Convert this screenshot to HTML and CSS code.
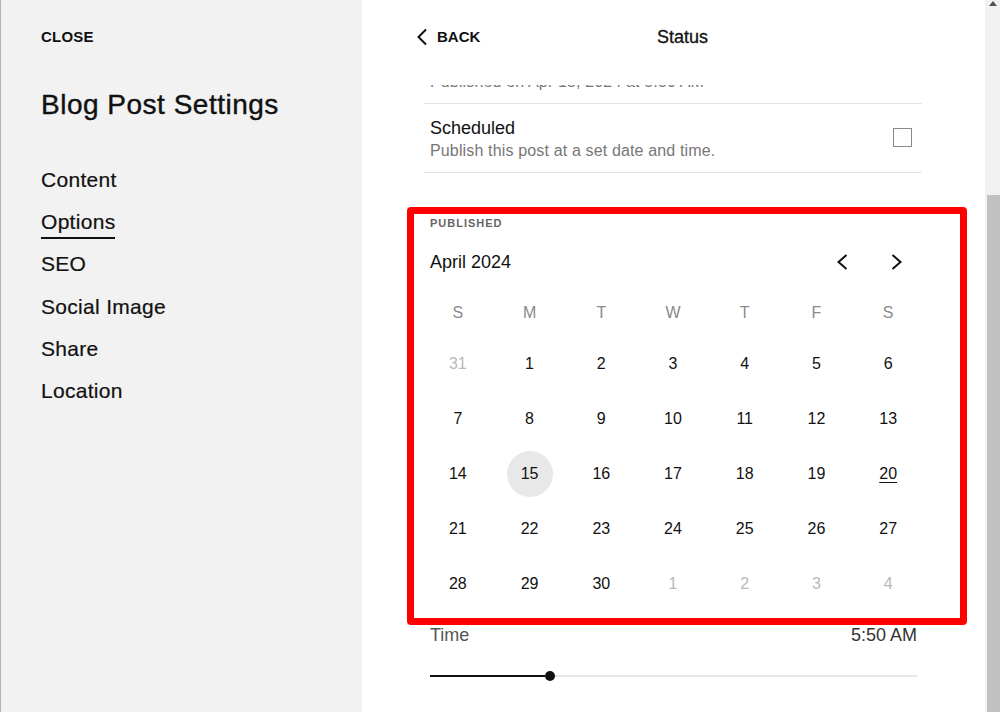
FILE: index.html
```html
<!DOCTYPE html>
<html lang="en">
<head>
<meta charset="utf-8">
<title>Blog Post Settings</title>
<link rel="stylesheet" href="styles.css">
</head>
<body>
<div class="app">
  <aside class="side">
    <div class="close">CLOSE</div>
    <h1 class="title">Blog Post Settings</h1>
    <nav class="nav">
      <a class="nav-item">Content</a>
      <a class="nav-item active"><span>Options</span></a>
      <a class="nav-item">SEO</a>
      <a class="nav-item">Social Image</a>
      <a class="nav-item">Share</a>
      <a class="nav-item">Location</a>
    </nav>
  </aside>

  <main class="panel">
    <header class="panel-head">
      <a class="back">
        <svg class="back-icon" viewBox="0 0 12 18" width="12" height="18"><path d="M10 1.5 L2.5 9 L10 16.5" fill="none" stroke="#111" stroke-width="2"/></svg>
        <span>BACK</span>
      </a>
      <div class="head-title">Status</div>
      <div></div>
    </header>

    <div class="viewport">
      <div class="scroll">
        <div class="row">
          <div class="row-text">
            <div class="row-title">Published</div>
            <div class="row-sub">Published on Apr 15, 2024 at 5:50 AM</div>
          </div>
          <span class="checkbox"></span>
        </div>
        <div class="row">
          <div class="row-text">
            <div class="row-title">Scheduled</div>
            <div class="row-sub">Publish this post at a set date and time.</div>
          </div>
          <span class="checkbox"></span>
        </div>

        <section class="cal">
          <div class="cal-label">PUBLISHED</div>
          <div class="cal-head">
            <div class="month">April 2024</div>
            <div class="cal-nav">
              <button class="nav-btn"><svg viewBox="0 0 12 16" width="12" height="16"><path d="M10.5 1 L2.5 8 L10.5 15" fill="none" stroke="#111" stroke-width="2"/></svg></button>
              <button class="nav-btn"><svg viewBox="0 0 12 16" width="12" height="16"><path d="M1.5 1 L9.5 8 L1.5 15" fill="none" stroke="#111" stroke-width="2"/></svg></button>
            </div>
          </div>
          <div class="grid">
            <div class="dow">S</div><div class="dow">M</div><div class="dow">T</div><div class="dow">W</div><div class="dow">T</div><div class="dow">F</div><div class="dow">S</div>

            <div class="day muted"><span>31</span></div><div class="day"><span>1</span></div><div class="day"><span>2</span></div><div class="day"><span>3</span></div><div class="day"><span>4</span></div><div class="day"><span>5</span></div><div class="day"><span>6</span></div>

            <div class="day"><span>7</span></div><div class="day"><span>8</span></div><div class="day"><span>9</span></div><div class="day"><span>10</span></div><div class="day"><span>11</span></div><div class="day"><span>12</span></div><div class="day"><span>13</span></div>

            <div class="day"><span>14</span></div><div class="day sel"><span>15</span></div><div class="day"><span>16</span></div><div class="day"><span>17</span></div><div class="day"><span>18</span></div><div class="day"><span>19</span></div><div class="day today"><span>20</span></div>

            <div class="day"><span>21</span></div><div class="day"><span>22</span></div><div class="day"><span>23</span></div><div class="day"><span>24</span></div><div class="day"><span>25</span></div><div class="day"><span>26</span></div><div class="day"><span>27</span></div>

            <div class="day"><span>28</span></div><div class="day"><span>29</span></div><div class="day"><span>30</span></div><div class="day muted"><span>1</span></div><div class="day muted"><span>2</span></div><div class="day muted"><span>3</span></div><div class="day muted"><span>4</span></div>
          </div>
          <div class="highlight"></div>
        </section>

        <div class="time-row">
          <span class="time-label">Time</span>
          <span class="time-value">5:50 AM</span>
        </div>
        <div class="slider">
          <span class="fill"></span>
          <span class="thumb"></span>
          <span class="rest"></span>
        </div>
      </div>
    </div>
  </main>

  <div class="scrollbar">
    <div class="sb-track"><span class="sb-arrow"></span></div>
    <div class="sb-thumb"></div>
  </div>
</div>
</body>
</html>
```

FILE: styles.css
```css
html, body {
  margin: 0;
  padding: 0;
}

body {
  font-family: "Liberation Sans", Arial, sans-serif;
  color: #111;
  background: #fff;
}

.app {
  display: flex;
  width: 1000px;
  height: 712px;
  overflow: hidden;
}

/* ---------- left sidebar ---------- */
.side {
  width: 362px;
  flex: none;
  box-sizing: border-box;
  background: #f2f2f2;
  border-left: 1px solid #b3b3b3;
  padding: 28px 0 0 40px;
}

.close {
  font-size: 15px;
  font-weight: 700;
  line-height: 18px;
  letter-spacing: 0.2px;
}

.title {
  margin: 42px 0 0;
  font-size: 28px;
  line-height: 34px;
  font-weight: normal;
  letter-spacing: 0.5px;
  -webkit-text-stroke: 0.4px #111;
}

.nav {
  margin-top: 37px;
  display: flex;
  flex-direction: column;
}

.nav-item {
  display: block;
  height: 42.2px;
  line-height: 42.2px;
  font-size: 21px;
  letter-spacing: 0.3px;
  color: #111;
  -webkit-text-stroke: 0.2px #111;
}

.nav-item.active span {
  display: inline-block;
  line-height: 26px;
  padding-bottom: 2px;
  border-bottom: 2px solid #111;
}

/* ---------- right panel ---------- */
.panel {
  width: 623px;
  flex: none;
  display: flex;
  flex-direction: column;
  background: #fff;
}

.panel-head {
  height: 85px;
  flex: none;
  box-sizing: border-box;
  display: grid;
  grid-template-columns: 1fr auto 1fr;
  align-items: start;
  padding: 28px 36px 0 54px;
  background: #fff;
}

.back {
  display: flex;
  align-items: center;
  height: 18px;
}

.back-icon {
  display: block;
}

.back span {
  margin-left: 9px;
  font-size: 15px;
  font-weight: 700;
  line-height: 18px;
}

.head-title {
  font-size: 18px;
  line-height: 18px;
  -webkit-text-stroke: 0.3px #111;
}

.viewport {
  flex: 1;
  overflow: hidden;
  padding: 0 63px 0 62px;
}

.scroll {
  margin-top: -50px;
}

.row {
  display: flex;
  align-items: center;
  justify-content: space-between;
  padding: 12px 10px 10px 6px;
  border-bottom: 1px solid #e3e3e3;
}

.row-title {
  font-size: 18px;
  line-height: 24px;
  color: #111;
}

.row-sub {
  font-size: 16px;
  line-height: 22px;
  letter-spacing: 0.15px;
  color: #777;
}

.checkbox {
  display: block;
  width: 17px;
  height: 17px;
  margin-top: -3px;
  border: 1px solid #8a8a8a;
}

/* ---------- calendar ---------- */
.cal {
  position: relative;
  padding-top: 43px;
}

.cal-label {
  padding-left: 6px;
  font-size: 11px;
  line-height: 14px;
  font-weight: 700;
  letter-spacing: 1px;
  color: #666;
}

.cal-head {
  display: flex;
  align-items: center;
  justify-content: space-between;
  height: 32px;
  margin-top: 16px;
  padding: 0 13px 0 6px;
}

.month {
  font-size: 18px;
  color: #111;
}

.cal-nav {
  display: flex;
  gap: 31px;
}

.nav-btn {
  width: 24px;
  height: 24px;
  padding: 0;
  border: 0;
  background: none;
  display: flex;
  align-items: center;
  justify-content: center;
}

.grid {
  display: grid;
  grid-template-columns: repeat(7, 1fr);
  grid-template-rows: 46px repeat(5, 55px);
  margin: 12px -2px 0;
}

.dow {
  display: flex;
  align-items: center;
  justify-content: center;
  font-size: 16px;
  color: #8a8a8a;
}

.day {
  display: flex;
  align-items: center;
  justify-content: center;
  font-size: 16px;
  color: #111;
}

.day span {
  width: 46px;
  height: 46px;
  border-radius: 50%;
  display: flex;
  align-items: center;
  justify-content: center;
}

.day.muted {
  color: #b9b9b9;
}

.day.sel span {
  background: #e8e8e8;
}

.day.today span {
  text-decoration: underline;
  text-underline-offset: 3px;
}

.highlight {
  position: absolute;
  left: -17px;
  top: 34px;
  width: 560px;
  height: 418px;
  box-sizing: border-box;
  border: 7px solid #ff0000;
  border-radius: 4px;
  pointer-events: none;
}

/* ---------- time ---------- */
.time-row {
  display: flex;
  justify-content: space-between;
  margin-top: 13px;
  padding: 0 5px 0 6px;
  font-size: 18px;
  line-height: 22px;
}

.time-label {
  color: #555;
}

.time-value {
  color: #333;
}

.slider {
  display: flex;
  align-items: center;
  height: 12px;
  margin: 24px 5px 0 6px;
}

.fill {
  width: 115px;
  height: 2px;
  background: #111;
}

.thumb {
  width: 10px;
  height: 10px;
  border-radius: 50%;
  background: #111;
  flex: none;
}

.rest {
  flex: 1;
  height: 2px;
  background: #e6e6e6;
}

/* ---------- scrollbar ---------- */
.scrollbar {
  width: 15px;
  flex: none;
  display: flex;
  flex-direction: column;
  background: #f1f1f1;
}

.sb-track {
  height: 195px;
  flex: none;
  display: flex;
  justify-content: center;
}

.sb-arrow {
  width: 0;
  height: 0;
  margin-top: 1px;
  border-left: 4px solid transparent;
  border-right: 4px solid transparent;
  border-bottom: 5px solid #505050;
}

.sb-thumb {
  flex: 1;
  margin-left: 2px;
  background: #c1c1c1;
}
```
